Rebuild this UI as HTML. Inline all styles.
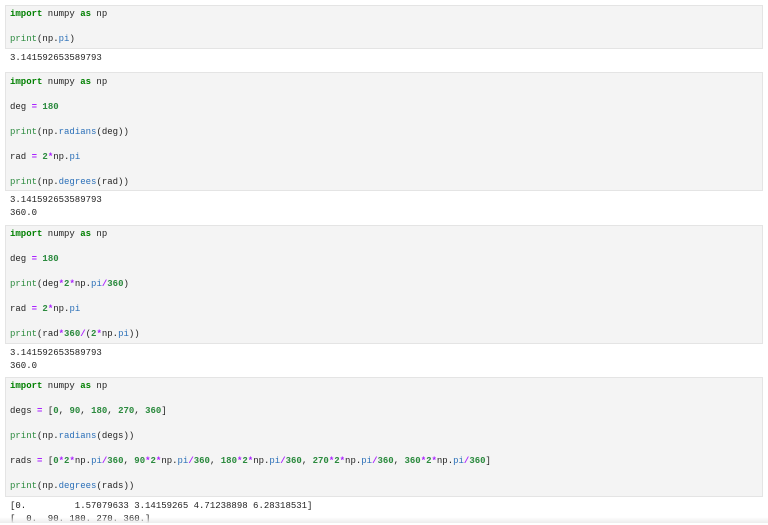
<!DOCTYPE html>
<html><head><style>
body{margin:0;width:768px;height:523px;background:#fff;position:relative;overflow:hidden;font-family:"Liberation Mono",monospace;font-size:9px;color:#222}
.c{position:absolute;left:5px;width:758px;background:#f4f4f4;border:1px solid #e4e4e4;box-sizing:border-box}
pre{position:absolute;left:10px;margin:0;font:inherit;line-height:12.5px;white-space:pre}
.k{color:#008000;font-weight:bold}.f{color:#2b8a3e}.n{color:#2b8a3e;font-weight:bold}.a{color:#2a6fb8}.o{color:#a2f;font-weight:bold}
.fade{position:absolute;left:0;right:0;bottom:0;height:6px;background:linear-gradient(#fff0,#ececec)}
</style></head><body>
<div class="c" style="top:5px;height:44px"></div>
<div class="c" style="top:72px;height:119px"></div>
<div class="c" style="top:225px;height:119px"></div>
<div class="c" style="top:377px;height:120px"></div>
<pre style="top:8px"><span class="k">import</span> numpy <span class="k">as</span> np

<span class="f">print</span>(np.<span class="a">pi</span>)</pre>
<pre style="top:52px">3.141592653589793</pre>
<pre style="top:76px"><span class="k">import</span> numpy <span class="k">as</span> np

deg <span class="o">=</span> <span class="n">180</span>

<span class="f">print</span>(np.<span class="a">radians</span>(deg))

rad <span class="o">=</span> <span class="n">2</span><span class="o">*</span>np.<span class="a">pi</span>

<span class="f">print</span>(np.<span class="a">degrees</span>(rad))</pre>
<pre style="top:194px">3.141592653589793
360.0</pre>
<pre style="top:228px"><span class="k">import</span> numpy <span class="k">as</span> np

deg <span class="o">=</span> <span class="n">180</span>

<span class="f">print</span>(deg<span class="o">*</span><span class="n">2</span><span class="o">*</span>np.<span class="a">pi</span><span class="o">/</span><span class="n">360</span>)

rad <span class="o">=</span> <span class="n">2</span><span class="o">*</span>np.<span class="a">pi</span>

<span class="f">print</span>(rad<span class="o">*</span><span class="n">360</span><span class="o">/</span>(<span class="n">2</span><span class="o">*</span>np.<span class="a">pi</span>))</pre>
<pre style="top:347px">3.141592653589793
360.0</pre>
<pre style="top:380px"><span class="k">import</span> numpy <span class="k">as</span> np

degs <span class="o">=</span> [<span class="n">0</span>, <span class="n">90</span>, <span class="n">180</span>, <span class="n">270</span>, <span class="n">360</span>]

<span class="f">print</span>(np.<span class="a">radians</span>(degs))

rads <span class="o">=</span> [<span class="n">0</span><span class="o">*</span><span class="n">2</span><span class="o">*</span>np.<span class="a">pi</span><span class="o">/</span><span class="n">360</span>, <span class="n">90</span><span class="o">*</span><span class="n">2</span><span class="o">*</span>np.<span class="a">pi</span><span class="o">/</span><span class="n">360</span>, <span class="n">180</span><span class="o">*</span><span class="n">2</span><span class="o">*</span>np.<span class="a">pi</span><span class="o">/</span><span class="n">360</span>, <span class="n">270</span><span class="o">*</span><span class="n">2</span><span class="o">*</span>np.<span class="a">pi</span><span class="o">/</span><span class="n">360</span>, <span class="n">360</span><span class="o">*</span><span class="n">2</span><span class="o">*</span>np.<span class="a">pi</span><span class="o">/</span><span class="n">360</span>]

<span class="f">print</span>(np.<span class="a">degrees</span>(rads))</pre>
<pre style="top:500px">[0.         1.57079633 3.14159265 4.71238898 6.28318531]
[  0.  90. 180. 270. 360.]</pre>
<div class="fade"></div>
</body></html>
